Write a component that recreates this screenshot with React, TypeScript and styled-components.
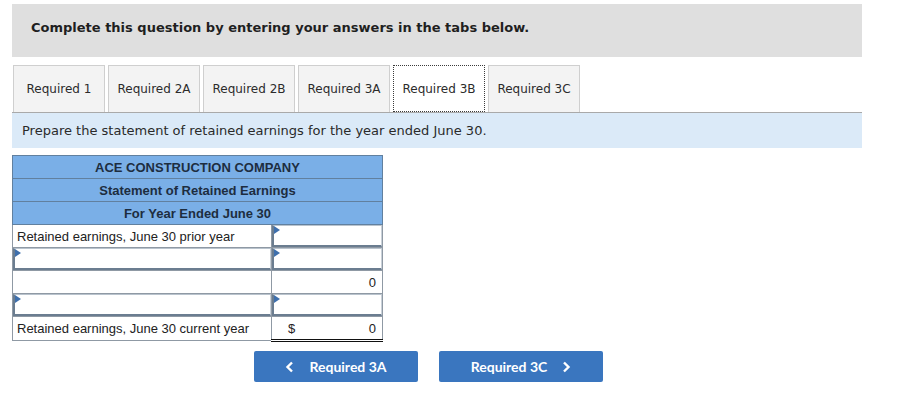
import React from 'react';
import styled, { createGlobalStyle } from 'styled-components';

const GlobalStyle = createGlobalStyle`
  body {
    margin: 0;
    background: #ffffff;
    font-family: 'DejaVu Sans', Verdana, sans-serif;
  }
`;

const tabs = ['Required 1', 'Required 2A', 'Required 2B', 'Required 3A', 'Required 3B', 'Required 3C'];

type Row =
  | { kind: 'label'; text: string; amount: 'input' | 'zero' | 'total' }
  | { kind: 'input'; amount: 'input' | 'zero' }
  | { kind: 'blank'; amount: 'zero' };

const rows: Row[] = [
  { kind: 'label', text: 'Retained earnings, June 30 prior year', amount: 'input' },
  { kind: 'input', amount: 'input' },
  { kind: 'blank', amount: 'zero' },
  { kind: 'input', amount: 'input' },
  { kind: 'label', text: 'Retained earnings, June 30 current year', amount: 'total' },
];

function App() {
  return (
    <>
      <GlobalStyle />
      <Page>
        <Intro>Complete this question by entering your answers in the tabs below.</Intro>
        <TabBar>
          {tabs.map((t) => (
            <Tab key={t} active={t === 'Required 3B'}>
              {t}
            </Tab>
          ))}
        </TabBar>
        <Prompt>Prepare the statement of retained earnings for the year ended June 30.</Prompt>

        <Sheet>
          <colgroup>
            <col style={{ width: 259 }} />
            <col style={{ width: 111 }} />
          </colgroup>
          <tbody>
            <tr>
              <HeadCell colSpan={2}>ACE CONSTRUCTION COMPANY</HeadCell>
            </tr>
            <tr>
              <HeadCell colSpan={2}>Statement of Retained Earnings</HeadCell>
            </tr>
            <tr>
              <HeadCell colSpan={2}>For Year Ended June 30</HeadCell>
            </tr>
            {rows.map((r, i) => (
              <tr key={i}>
                {r.kind === 'label' && <LabelCell>{r.text}</LabelCell>}
                {r.kind === 'blank' && <LabelCell />}
                {r.kind === 'input' && (
                  <InputCell>
                    <InputBox />
                  </InputCell>
                )}
                {r.amount === 'input' && (
                  <InputCell>
                    <InputBox />
                  </InputCell>
                )}
                {r.amount === 'zero' && <AmountCell>0</AmountCell>}
                {r.amount === 'total' && (
                  <AmountCell total>
                    <Dollar>$</Dollar>0
                  </AmountCell>
                )}
              </tr>
            ))}
          </tbody>
        </Sheet>

        <Nav>
          <NavButton>
            <svg width="10" height="12" viewBox="0 0 10 12">
              <polyline points="7,1.5 2.5,6 7,10.5" fill="none" stroke="#fff" strokeWidth="2.4" />
            </svg>
            Required 3A
          </NavButton>
          <NavButton>
            Required 3C
            <svg width="10" height="12" viewBox="0 0 10 12">
              <polyline points="3,1.5 7.5,6 3,10.5" fill="none" stroke="#fff" strokeWidth="2.4" />
            </svg>
          </NavButton>
        </Nav>
      </Page>
    </>
  );
}

export default App;

const Page = styled.div`
  width: 850px;
  padding: 4px 0 0 12px;
`;

const Intro = styled.div`
  height: 53px;
  background: #dfdfdf;
  padding: 16px 0 0 19px;
  box-sizing: border-box;
  font-size: 13px;
  font-weight: bold;
  color: #1f1f1f;
`;

const TabBar = styled.div`
  display: flex;
  gap: 3px;
  margin-top: 8px;
  padding-left: 1px;
  border-bottom: 1px solid #a9a9a9;
`;

const Tab = styled.div<{ active?: boolean }>`
  width: 92px;
  height: 47px;
  box-sizing: border-box;
  display: flex;
  align-items: center;
  justify-content: center;
  font-size: 12px;
  color: #2b2b2b;
  background: ${({ active }) => (active ? '#ffffff' : '#f3f3f3')};
  border: ${({ active }) => (active ? '1px dotted #3a3a3a' : '1px solid #cfcfcf')};
  border-bottom: ${({ active }) => (active ? '1px dotted #3a3a3a' : 'none')};
  margin-bottom: ${({ active }) => (active ? '-1px' : '0')};
`;

const Prompt = styled.div`
  height: 35px;
  background: #dbeaf8;
  padding-left: 10px;
  display: flex;
  align-items: center;
  font-size: 13px;
  color: #2a2a2a;
`;

const Sheet = styled.table`
  margin-top: 7px;
  width: 370px;
  border-collapse: collapse;
  table-layout: fixed;
  font-family: 'Liberation Sans', Arial, sans-serif;
  font-size: 13px;
  color: #222;
`;

const HeadCell = styled.td`
  height: 22px;
  padding: 0;
  background: #7aafe7;
  border: 1px solid #61809f;
  text-align: center;
  font-weight: bold;
  color: #1d2d3f;
`;

const LabelCell = styled.td`
  height: 22px;
  padding: 0 0 0 4px;
  border: 1px solid #8f99a4;
  background: #fff;
  white-space: nowrap;
`;

const InputCell = styled.td`
  height: 22px;
  padding: 0;
  border: 1px solid #8f99a4;
`;

const InputBox = styled.div`
  position: relative;
  height: 22px;
  box-sizing: border-box;
  background: #fff;
  border-top: 1px solid #b9c3cd;
  border-right: 1px solid #c9d1d9;
  border-left: 2px solid #6b7d90;
  border-bottom: 2px solid #6b7d90;

  &::before {
    content: '';
    position: absolute;
    left: 0;
    top: 0;
    border-top: 4px solid transparent;
    border-bottom: 4px solid transparent;
    border-left: 6px solid #3f70ad;
  }
`;

const AmountCell = styled.td<{ total?: boolean }>`
  height: 22px;
  padding: 0 6px 0 16px;
  text-align: right;
  border: 1px solid #8f99a4;
  border-top: 1px solid #111;
  border-bottom: ${({ total }) => (total ? '3px double #111' : '1px solid #8f99a4')};
`;

const Dollar = styled.span`
  float: left;
`;

const Nav = styled.div`
  display: flex;
  gap: 21px;
  margin-top: 9px;
  padding-left: 242px;
`;

const NavButton = styled.button`
  width: 164px;
  height: 31px;
  display: flex;
  align-items: center;
  justify-content: center;
  gap: 14px;
  border: none;
  border-radius: 2px;
  background: #3a76bf;
  color: #fff;
  font-family: Lato, 'Open Sans', sans-serif;
  font-weight: bold;
  font-size: 14px;
`;
